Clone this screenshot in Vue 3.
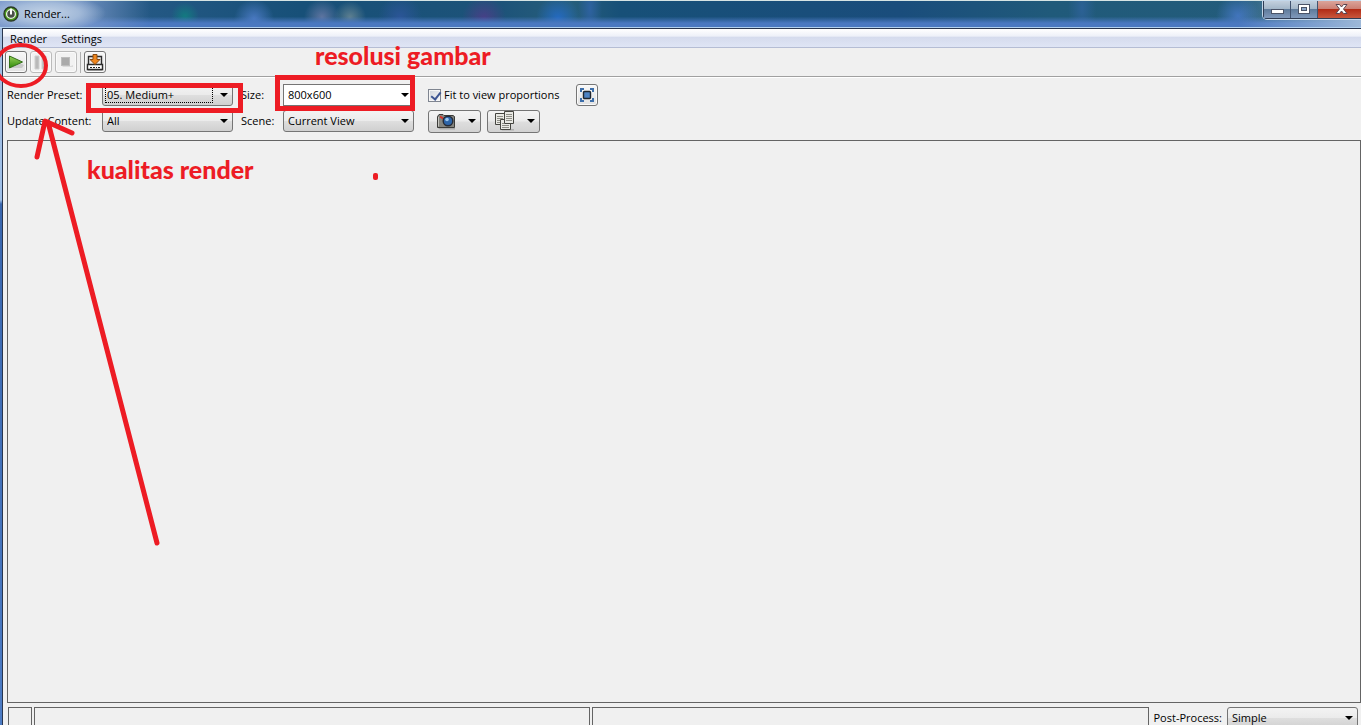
<script setup>
import { ref } from 'vue'

const preset = ref('05. Medium+')
const content = ref('All')
const size = ref('800x600')
const scene = ref('Current View')
const postProcess = ref('Simple')
const fitToView = ref(true)
</script>

<template>
  <div class="window">
    <header class="titlebar">
      <svg class="app-icon" viewBox="0 0 16 16" aria-hidden="true">
        <circle cx="8" cy="8" r="7" fill="#4c9a1c" stroke="#2b3a26" stroke-width="1.4" />
        <circle cx="8" cy="8" r="4.4" fill="#4a4f48" stroke="#e9f3e2" stroke-width="1.3" />
        <path d="M8 2.500v6" stroke="#fff" stroke-width="2" />
      </svg>
      <h1 class="title">Render...</h1>
      <div class="caption-buttons">
        <button class="cap" aria-label="Minimize">
          <svg width="13" height="7" viewBox="0 0 13 7"><rect x=".5" y="1.500" width="12" height="4" fill="#fff" stroke="#4b5468" /></svg>
        </button>
        <button class="cap" aria-label="Maximize">
          <svg width="13" height="11" viewBox="0 0 13 11"><rect x=".5" y=".5" width="11" height="9" fill="#fff" stroke="#4b5468" /><rect x="3.500" y="3.500" width="5" height="3" fill="#8aa6c8" stroke="#4b5468" /></svg>
        </button>
        <button class="cap close" aria-label="Close">
          <svg width="13" height="11" viewBox="0 0 13 11"><path d="M1 .5h3.500l2 2.500 2-2.500H12L8.500 5l3.500 4.500H8.500l-2-2.500-2 2.500H1L4.500 5z" fill="#fff" stroke="#5a4450" /></svg>
        </button>
      </div>
    </header>

    <div class="client">
      <nav class="menubar">
        <button class="menu">Render</button>
        <button class="menu">Settings</button>
      </nav>

      <div class="toolbar">
        <button class="tool" aria-label="Start render">
          <svg width="16" height="16" viewBox="0 0 16 16">
            <defs><linearGradient id="go" x1="0" y1="0" x2="0" y2="1"><stop offset="0" stop-color="#9ad35c" /><stop offset="1" stop-color="#2f8a08" /></linearGradient></defs>
            <path d="M3 14h11l2-3-4-2z" fill="#c9c9c9" />
            <path d="M1.500 2v12L14.500 8z" fill="url(#go)" stroke="#35701a" />
          </svg>
        </button>
        <button class="tool" disabled aria-label="Pause render">
          <svg width="16" height="16" viewBox="0 0 16 16"><path d="M2 2h4v13H2zM9 2h4v13H9z" fill="#b9b9b9" stroke="#cfcfcf" /></svg>
        </button>
        <button class="tool" disabled aria-label="Stop render">
          <svg width="16" height="16" viewBox="0 0 16 16"><path d="M4 12h9l2-1v2H5z" fill="#dadada" /><rect x="3.500" y="3.500" width="8" height="8" fill="#aaa" stroke="#bdbdbd" /></svg>
        </button>
        <span class="divider"></span>
        <button class="tool" aria-label="Save image">
          <svg width="18" height="18" viewBox="0 0 18 18">
            <path d="M2.500 3.500h13v13h-13z" fill="#eee" stroke="#2d2d2d" stroke-width="1.400" />
            <path d="M1.500 11.500h15v5h-15z" fill="#fff" stroke="#2d2d2d" stroke-width="1.400" />
            <path d="M4 14.500h2m1 0h2m1 0h1m1 0h2" stroke="#222" />
            <path d="M7 1.500h4v5h3L9 11.500 4 6.500h3z" fill="#f0861c" stroke="#8a4a10" />
          </svg>
        </button>
      </div>

      <form class="settings" @submit.prevent>
        <label for="preset">Render Preset:</label>
        <div class="combo focused">
          <select id="preset" v-model="preset"><option>05. Medium+</option></select>
        </div>
        <label for="size">Size:</label>
        <div class="combo white">
          <select id="size" v-model="size"><option>800x600</option></select>
        </div>
        <div class="extras">
          <label class="check">
            <input v-model="fitToView" type="checkbox" />
            <span>Fit to view proportions</span>
          </label>
          <button class="tool" type="button" aria-label="Fit to window">
            <svg width="16" height="16" viewBox="0 0 16 16">
              <path d="M2 5V2H5M11 2h3V5M14 11v3H11M5 14H2V11" fill="none" stroke="#3c6eaa" stroke-width="2" />
              <rect x="4.500" y="4.500" width="7" height="7" rx="1" fill="#4e83c2" stroke="#20262e" stroke-width="1.400" />
            </svg>
          </button>
        </div>

        <label for="content">Update Content:</label>
        <div class="combo">
          <select id="content" v-model="content"><option>All</option></select>
        </div>
        <label for="scene">Scene:</label>
        <div class="combo">
          <select id="scene" v-model="scene"><option>Current View</option></select>
        </div>
        <div class="extras pickers">
          <button class="picker" type="button" aria-label="Camera">
            <svg width="20" height="18" viewBox="0 0 20 18">
              <path d="M2 16h17v1.500H4z" fill="#aaa" />
              <path d="M1.500 4.500 3 2.500h4l1 1h9l1.500 1v11h-17z" fill="#85857f" stroke="#3b3b38" />
              <path d="M2.500 5v9.500" stroke="#c6c6c0" />
              <path d="M4 4.500l3 2" stroke="#dd2c20" stroke-width="1.600" />
              <circle cx="12" cy="9" r="4.800" fill="#2c64a8" stroke="#252b38" stroke-width="1.400" />
              <circle cx="11" cy="7.500" r="1.800" fill="#9cc8ee" />
            </svg>
            <i class="caret"></i>
          </button>
          <button class="picker" type="button" aria-label="Scenes">
            <svg width="20" height="20" viewBox="0 0 20 20">
              <path d="M6 18h13v1.500H7z" fill="#b0b0b0" />
              <g fill="#e9e9e4" stroke="#454540">
                <path d="M.5 2.500h9v11h-9z" /><path d="M5.500 8.500h10v10h-10z" /><path d="M9.500.5h9v12h-9z" />
              </g>
              <path d="M2 5.500h6M2 7.500h6M2 9.500h3M2 11.500h3M11 3.500h6M11 5.500h6M11 7.500h6M11 9.500h6M7 14.500h7M7 16.500h7M7 12.500h2" stroke="#8d8d86" />
            </svg>
            <i class="caret"></i>
          </button>
        </div>
      </form>

      <main class="canvas"></main>

      <footer class="status">
        <div class="cell tiny"></div>
        <div class="cell wide"></div>
        <div class="cell wide"></div>
        <label for="post">Post-Process:</label>
        <div class="combo">
          <select id="post" v-model="postProcess"><option>Simple</option></select>
        </div>
      </footer>
    </div>

    <svg class="marks" width="520" height="560" viewBox="0 0 520 560">
      <g fill="none" stroke="#ed1c24" stroke-width="5">
        <ellipse cx="21" cy="65.500" rx="25" ry="20.500" stroke-width="4" />
        <rect x="88.500" y="85.500" width="152" height="25" />
        <rect x="277.500" y="77.500" width="135" height="31" />
        <path d="M157 543 48 122M72 133 45 121 37 157" stroke-linecap="round" stroke-linejoin="round" />
      </g>
      <rect x="373" y="173" width="5" height="7" rx="2" fill="#ed1c24" />
      <text x="315" y="65">resolusi gambar</text>
      <text x="87" y="179">kualitas render</text>
    </svg>
  </div>
</template>

<style>
html,
body {
  background: #f0f0f0;
}
</style>

<style scoped>
.window,
.window * {
  box-sizing: border-box;
}
.window {
  position: relative;
  display: flex;
  flex-direction: column;
  height: 100vh;
  overflow: hidden;
  font: 11px/16px "Open Sans", "Noto Sans", sans-serif;
  color: #000;
  background: linear-gradient(#a5bedf 0, #9fc0e8 200px, #3a67ae 204px, #4d7cc4 100%);
}
.window button,
.window select {
  font: inherit;
  color: inherit;
  margin: 0;
}
.titlebar {
  display: flex;
  align-items: flex-start;
  height: 28px;
  flex: none;
  padding-left: 3px;
  border-top: 1px solid #d6e4e4;
  border-bottom: 1px solid #b2d0ee;
  background:
    radial-gradient(ellipse 60px 18px at 46px 12px, #c3d3e6 0, #b0c5dfcc 55%, #b0c5df00 100%),
    linear-gradient(90deg, #7f9ccd 0, #7f9ccdcc 80px, #7f9ccd00 150px),
    linear-gradient(90deg, #87a4d000 91%, #9db8d8 100%),
    linear-gradient(#4d7cc400 60%, #4a78c0 85%),
    radial-gradient(circle at 185px 15px, #137a80 0, #10808000 14px),
    radial-gradient(circle at 254px 18px, #4878c0 0, #4878c000 20px),
    radial-gradient(circle at 322px 16px, #5d74a0 0, #5d74a000 18px),
    radial-gradient(circle at 350px 16px, #5d7f90 0, #5d7f9000 16px),
    radial-gradient(circle at 400px 16px, #2b5597 0, #2b559700 22px),
    radial-gradient(circle at 484px 17px, #474087 0, #47408700 22px),
    radial-gradient(circle at 558px 17px, #246ac0 0, #246ac000 22px),
    radial-gradient(ellipse 12px 40px at 590px 8px, #2e62a0 0, #2e62a000 100%),
    radial-gradient(ellipse 14px 40px at 1082px 8px, #2c6195 0, #2c619500 100%),
    radial-gradient(circle at 1238px 15px, #4275bd 0, #4275bd00 22px),
    linear-gradient(90deg, #30608f 0, #175078 300px, #1d5379 500px, #275f7b 570px, #175078 620px, #1a4d7c 900px, #205a7a 1050px, #255d7b 100%);
}
.app-icon {
  width: 16px;
  height: 16px;
  margin-top: 5px;
}
.title {
  margin: 5px 0 0 5px;
  font-size: 11px;
  line-height: 16px;
  font-weight: 400;
}
.caption-buttons {
  display: flex;
  margin-left: auto;
  height: 18px;
  border: 1px solid #303d55;
  border-width: 0 0 1px 1px;
  border-radius: 0 0 0 4px;
  box-shadow: 0 0 0 1px #c3d7ea;
}
.cap {
  display: flex;
  align-items: center;
  justify-content: center;
  width: 27px;
  padding: 0;
  border: 0;
  border-right: 1px solid #42536f;
  background: linear-gradient(#c3d0de 0, #a4b7c9 45%, #5f7b9b 50%, #8099bb 100%);
}
.cap:first-child {
  padding-top: 4px;
}
.close {
  width: 43px;
  padding-left: 4px;
  border-right: 0;
  background: linear-gradient(#dba49a 0, #cc8074 45%, #b22c16 50%, #c8573c 100%);
}
.client {
  display: flex;
  flex-direction: column;
  flex: 1;
  min-height: 0;
  margin-left: 2px;
  border-left: 1px solid #29364f;
  border-top: 1px solid #29364f;
  background: #f0f0f0;
}
.menubar {
  display: flex;
  flex: none;
  gap: 14px;
  height: 19px;
  padding-left: 7px;
  border-bottom: 1px solid #b5bdd4;
  background: linear-gradient(#fff 0, #edf0f8 40%, #d5dbed 45%, #dfe5f5 100%);
}
.menu {
  padding: 1px 0 0;
  border: 0;
  background: none;
}
.toolbar {
  display: flex;
  flex: none;
  align-items: center;
  gap: 3px;
  height: 29px;
  padding-left: 2px;
  border-bottom: 1px solid #a0a0a0;
}
.tool {
  display: flex;
  align-items: center;
  justify-content: center;
  width: 22px;
  height: 22px;
  padding: 0;
  border: 1px solid #757575;
  border-radius: 3px;
  background: linear-gradient(#f8f8f8, #e2e2e2);
  box-shadow: inset 0 0 0 1px #fafafa;
}
.tool:disabled {
  border-color: #bbb;
  background: #f2f2f2;
}
.divider {
  width: 1px;
  height: 21px;
  background: #b0b0b0;
}
.settings {
  display: grid;
  flex: none;
  grid-template-columns: 87px 131px 34px 131px 1fr;
  grid-template-rows: 22px 22px;
  gap: 4px 8px;
  align-items: center;
  padding: 6px 0 8px 4px;
  border-top: 1px solid #fff;
  white-space: nowrap;
}
.combo {
  position: relative;
  height: 22px;
}
.combo::after,
.caret {
  width: 8px;
  height: 4px;
  background: #000;
  clip-path: polygon(0 0, 100% 0, 50% 100%);
}
.combo::after {
  content: "";
  position: absolute;
  right: 5px;
  top: 9px;
  pointer-events: none;
}
.combo select {
  display: block;
  width: 100%;
  height: 22px;
  padding: 0 20px 0 4px;
  appearance: none;
  border: 1px solid #757575;
  border-radius: 3px;
  background: linear-gradient(#f3f3f3 0, #ebebeb 48%, #dedede 52%, #d0d0d0 100%);
}
.combo.white select {
  border-radius: 0;
  background: #fff;
}
.combo.focused::before {
  content: "";
  position: absolute;
  inset: 3px 20px 3px 3px;
  border: 1px dotted #000;
  pointer-events: none;
}
.extras {
  display: flex;
  align-items: center;
  gap: 17px;
  padding-left: 6px;
}
.pickers {
  gap: 6px;
}
.check {
  display: flex;
  align-items: center;
  gap: 3px;
}
.check input {
  position: relative;
  appearance: none;
  width: 13px;
  height: 13px;
  margin: 0;
  border: 1px solid #7f8590;
  background: linear-gradient(135deg, #cdd2da, #fafafa);
  box-shadow: inset 0 0 0 1px #f6f6f6;
}
.check input:checked::after {
  content: "";
  position: absolute;
  left: 4px;
  top: 0;
  width: 4px;
  height: 8px;
  border: solid #3d5592;
  border-width: 0 2px 2px 0;
  transform: rotate(38deg);
}
.picker {
  display: flex;
  align-items: center;
  justify-content: space-between;
  width: 53px;
  height: 23px;
  padding: 0 4px 0 7px;
  border: 1px solid #757575;
  border-radius: 3px;
  background: linear-gradient(#f4f4f4 0, #ebebeb 48%, #dedede 52%, #d2d2d2 100%);
}
.canvas {
  flex: 1;
  min-height: 0;
  margin-left: 4px;
  border: 1px solid #646464;
}
.status {
  display: flex;
  flex: none;
  gap: 2px;
  height: 18px;
  margin: 4px 3px 0 5px;
  overflow: hidden;
  white-space: nowrap;
}
.cell {
  height: 22px;
  border: 1px solid #646464;
}
.tiny {
  width: 24px;
}
.wide {
  flex: 1;
}
.status label {
  margin-left: 3px;
  padding: 3px 3px 0 0;
}
.status .combo {
  width: 131px;
  flex: none;
}
.marks {
  position: absolute;
  left: 0;
  top: 0;
  pointer-events: none;
}
.marks text {
  fill: #ed1c24;
  font: 900 25px Lato, sans-serif;
}
</style>
